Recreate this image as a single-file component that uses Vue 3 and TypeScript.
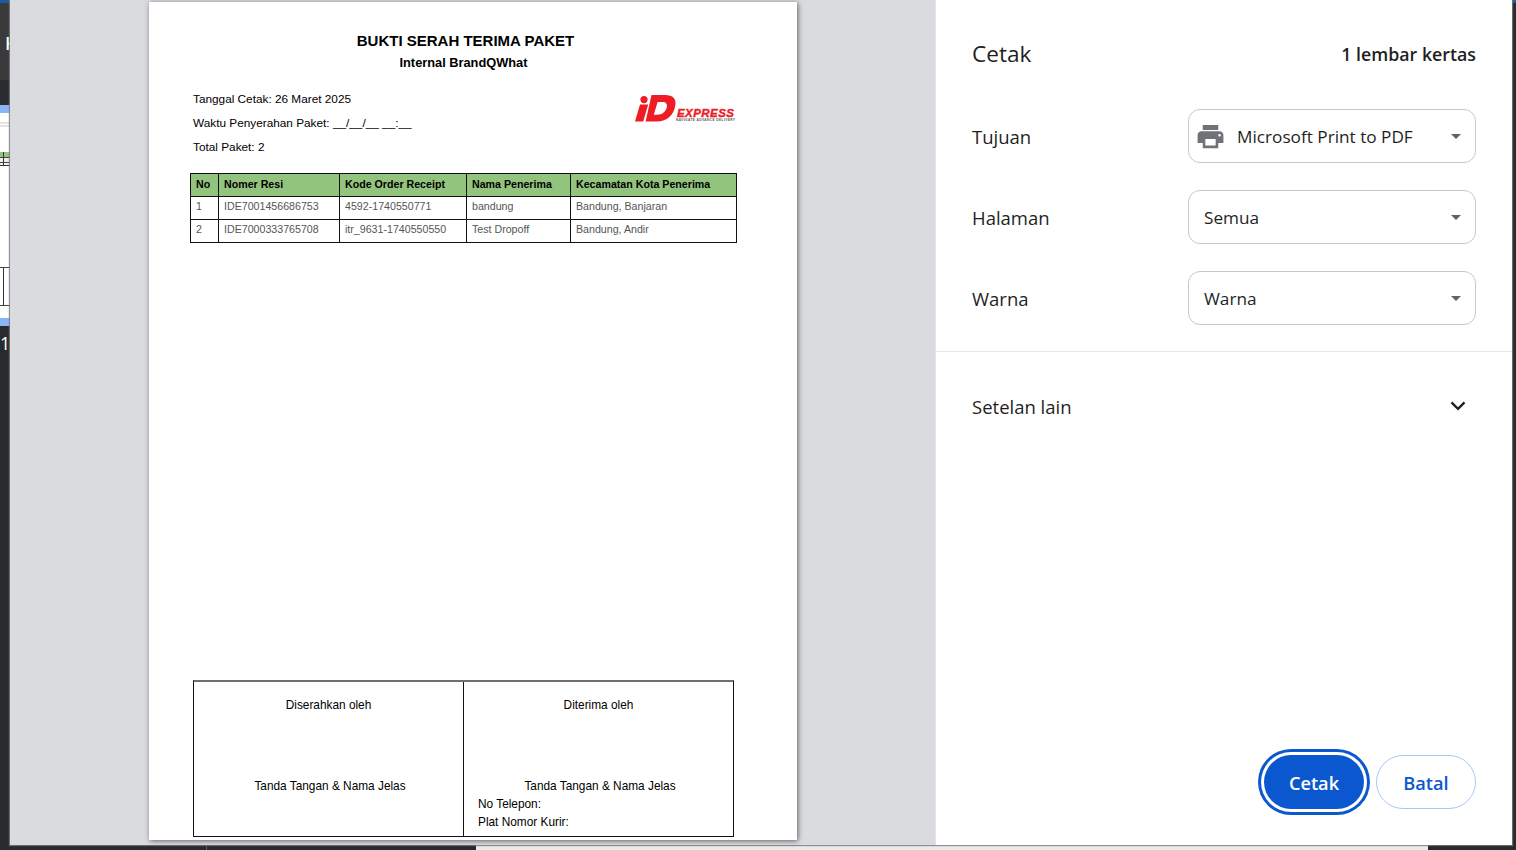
<script setup lang="ts">
interface Row {
  no: number
  resi: string
  order: string
  nama: string
  kota: string
}

const rows: Row[] = [
  { no: 1, resi: 'IDE7001456686753', order: '4592-1740550771', nama: 'bandung', kota: 'Bandung, Banjaran' },
  { no: 2, resi: 'IDE7000333765708', order: 'itr_9631-1740550550', nama: 'Test Dropoff', kota: 'Bandung, Andir' },
]

const settings = [
  { label: 'Tujuan', value: 'Microsoft Print to PDF', printer: true },
  { label: 'Halaman', value: 'Semua', printer: false },
  { label: 'Warna', value: 'Warna', printer: false },
]
</script>

<template>
  <div class="screen">
    <!-- window behind the dialog -->
    <div class="behind">
      <div class="b-blue-top"></div>
      <div class="b-head">K</div>
      <div class="b-sub"></div>
      <div class="b-blue"></div>
      <div class="b-sheet">
        <div class="mini-text"></div>
        <div class="mini-table"></div>
        <div class="mini-box"></div>
      </div>
      <div class="b-blue"></div>
      <div class="b-foot">1</div>
    </div>
    <div class="bottom-tick"></div>
    <div class="bottom-strip"></div>
    <div class="right-strip"></div>

    <div class="dialog">
      <div class="preview">
        <div class="page">
          <h1 class="doc-title">BUKTI SERAH TERIMA PAKET</h1>
          <h2 class="doc-sub">Internal BrandQWhat</h2>

          <div class="doc-head">
            <div class="meta">
              <p>Tanggal Cetak: 26 Maret 2025</p>
              <p>Waktu Penyerahan Paket: __/__/__ __:__</p>
              <p>Total Paket: 2</p>
            </div>
            <svg class="logo" width="102" height="30" viewBox="0 0 102 30">
              <circle cx="9" cy="4.6" r="3.6" fill="#ee1c25" />
              <polygon points="0,26.5 5,9.5 13.2,9.5 8.2,26.5" fill="#ee1c25" />
              <path
                fill="#ee1c25"
                fill-rule="evenodd"
                d="M16.5 0H30c8 0 11.5 4 10.3 10.5C38.8 20 32 26.5 22 26.5H10.6ZM22.6 7 18.8 19.8H22.5c4.5 0 8-2.6 9.2-7.2C32.6 9 31 7 27.6 7Z"
              />
              <text x="42" y="21.5" class="logo-word" textLength="57">EXPRESS</text>
              <text x="41" y="26" class="logo-tag" textLength="59">NAVIGATE ADVANCE DELIVERY</text>
            </svg>
          </div>

          <table class="resi-table">
            <colgroup>
              <col style="width: 28px" />
              <col style="width: 121px" />
              <col style="width: 127px" />
              <col style="width: 104px" />
              <col />
            </colgroup>
            <thead>
              <tr>
                <th>No</th>
                <th>Nomer Resi</th>
                <th>Kode Order Receipt</th>
                <th>Nama Penerima</th>
                <th>Kecamatan Kota Penerima</th>
              </tr>
            </thead>
            <tbody>
              <tr v-for="row in rows" :key="row.no">
                <td>{{ row.no }}</td>
                <td>{{ row.resi }}</td>
                <td>{{ row.order }}</td>
                <td>{{ row.nama }}</td>
                <td>{{ row.kota }}</td>
              </tr>
            </tbody>
          </table>

          <div class="sign-box">
            <div class="sign-col">
              <div class="sign-top">Diserahkan oleh</div>
              <div class="sign-name">Tanda Tangan &amp; Nama Jelas</div>
            </div>
            <div class="sign-col sign-right">
              <div class="sign-top">Diterima oleh</div>
              <div class="sign-name">Tanda Tangan &amp; Nama Jelas</div>
              <div class="sign-extra">No Telepon:</div>
              <div class="sign-extra">Plat Nomor Kurir:</div>
            </div>
          </div>
        </div>
      </div>

      <aside class="panel">
        <header class="panel-head">
          <span class="panel-title">Cetak</span>
          <span class="sheet-count">1 lembar kertas</span>
        </header>

        <div class="settings">
          <div v-for="item in settings" :key="item.label" class="setting">
            <span class="setting-label">{{ item.label }}</span>
            <div class="select" :class="{ 'has-icon': item.printer }">
              <svg v-if="item.printer" class="printer" width="31" height="31" viewBox="0 0 24 24">
                <path
                  fill="#6f7277"
                  d="M19 8H5c-1.66 0-3 1.34-3 3v6h4v4h12v-4h4v-6c0-1.66-1.34-3-3-3zm-3 11H8v-5h8v5zm3-7c-.55 0-1-.45-1-1s.45-1 1-1 1 .45 1 1-.45 1-1 1zm-1-9H6v4h12V3z"
                />
              </svg>
              <span class="select-value">{{ item.value }}</span>
              <span class="caret"></span>
            </div>
          </div>
        </div>

        <div class="more">
          <span>Setelan lain</span>
          <svg width="24" height="24" viewBox="0 0 24 24">
            <path d="M5.5 8.4l6.5 6.5 6.5-6.5" fill="none" stroke="#1f1f1f" stroke-width="2.3" />
          </svg>
        </div>

        <footer class="actions">
          <button class="btn btn-primary">Cetak</button>
          <button class="btn btn-ghost">Batal</button>
        </footer>
      </aside>
    </div>
  </div>
</template>

<style>
html,
body {
  margin: 0;
  background: #292a2d;
  overflow: hidden;
}
</style>

<style scoped>
.screen {
  position: relative;
  width: 1516px;
  height: 850px;
  overflow: hidden;
  background: #292a2d;
}

.behind {
  position: absolute;
  left: 0;
  top: 0;
  width: 10px;
  height: 850px;
  display: flex;
  flex-direction: column;
  overflow: hidden;
  font-family: 'Open Sans', sans-serif;
  color: #fff;
}

.b-blue-top {
  height: 3px;
  background: #1a5ca4;
}

.b-head {
  height: 77px;
  background: #3a3a3b;
  font-size: 18px;
  font-weight: 600;
  line-height: 80px;
  padding-left: 5px;
}

.b-sub {
  height: 25px;
  background: #2b2c2f;
}

.b-blue {
  height: 8px;
  flex: none;
  background: #8ab4f8;
}

.b-sheet {
  height: 205px;
  background: #fff;
  display: flex;
  flex-direction: column;
}

.mini-text {
  height: 5px;
  margin-top: 9px;
  background: linear-gradient(#e4e4e4 0 2px, #fff 2px 3px, #e4e4e4 3px);
}

.mini-table {
  height: 14px;
  margin-top: 25px;
  background: linear-gradient(#93c47d 0 5px, #444 5px 6px, #eee 6px 10px, #444 10px 11px, #eee 11px 13px, #333 13px);
  position: relative;
}

.mini-table::after {
  content: '';
  position: absolute;
  left: 3px;
  top: 0;
  bottom: 0;
  width: 1px;
  background: #333;
}

.mini-box {
  height: 37px;
  margin-top: 101px;
  border-top: 1px solid #444;
  border-bottom: 1px solid #444;
  position: relative;
}

.mini-box::after {
  content: '';
  position: absolute;
  left: 3px;
  top: 0;
  bottom: 0;
  width: 1px;
  background: #333;
}

.b-foot {
  flex: 1;
  font-size: 18px;
  font-weight: 500;
  line-height: 34px;
  padding-left: 0;
}

.bottom-tick {
  position: absolute;
  left: 206px;
  top: 846px;
  width: 1px;
  height: 4px;
  background: #5c5d60;
}

.bottom-strip {
  position: absolute;
  left: 476px;
  top: 845px;
  width: 952px;
  height: 5px;
  background: #e9ebe9;
}

.right-strip {
  position: absolute;
  left: 1512px;
  top: 0;
  width: 4px;
  height: 3px;
  background: #1a5ca4;
}

.dialog {
  position: absolute;
  left: 10px;
  top: 0;
  width: 1502px;
  height: 845px;
  display: flex;
  background: #fff;
  box-shadow: 0 0 1px 1px rgba(120, 120, 120, 0.8);
}

.preview {
  width: 925px;
  flex: none;
  box-sizing: border-box;
  padding: 2px 0 0 139px;
  background: #dadbdf;
}

.page {
  width: 648px;
  height: 838px;
  box-sizing: border-box;
  padding: 0 60px 3px 41px;
  display: flex;
  flex-direction: column;
  background: #fff;
  box-shadow: 1px 1px 5px rgba(0, 0, 0, 0.55);
  font-family: 'Liberation Sans', Arial, sans-serif;
  color: #000;
}

.doc-title {
  margin: 30px 0 0;
  padding-left: 4px;
  font-size: 15px;
  line-height: 18px;
  font-weight: 700;
  text-align: center;
}

.doc-sub {
  margin: 5px 0 0;
  font-size: 12.8px;
  line-height: 15px;
  font-weight: 700;
  text-align: center;
}

.doc-head {
  display: flex;
  justify-content: space-between;
  align-items: flex-start;
  margin-top: 17px;
  padding-left: 3px;
  height: 86px;
}

.meta p {
  margin: 0;
  font-size: 11.8px;
  line-height: 24px;
}

.logo {
  margin: 8px 0 0 0;
  flex: none;
}

.logo-word {
  font-family: 'Liberation Sans', Arial, sans-serif;
  font-size: 11.5px;
  font-weight: 700;
  font-style: italic;
  fill: #ee1c25;
  stroke: #ee1c25;
  stroke-width: 0.4px;
}

.logo-tag {
  font-family: 'Liberation Sans', Arial, sans-serif;
  font-size: 3.2px;
  font-weight: 700;
  fill: #555;
}

.resi-table {
  width: 547px;
  table-layout: fixed;
  border-collapse: collapse;
  font-size: 10.65px;
  color: #555;
}

.resi-table th,
.resi-table td {
  box-sizing: border-box;
  height: 23px;
  padding: 0 5px 2px;
  border: 1.2px solid #111;
  text-align: left;
  white-space: nowrap;
}

.resi-table td {
  padding-bottom: 4px;
}

.resi-table th {
  background: #93c47d;
  color: #000;
  font-weight: 700;
}

.sign-box {
  margin: auto 3px 0;
  height: 157px;
  box-sizing: border-box;
  display: flex;
  border: 1.2px solid #111;
  border-top: 2px solid #6f6f6f;
  font-size: 11.85px;
  line-height: 18px;
}

.sign-col {
  flex: 1;
  min-width: 0;
  box-sizing: border-box;
  padding-top: 14px;
  text-align: center;
}

.sign-right {
  border-left: 1.2px solid #111;
}

.sign-top {
  height: 81px;
}

.sign-name {
  padding-left: 3px;
}

.sign-extra {
  text-align: left;
  padding-left: 14px;
}

.panel {
  flex: 1;
  min-width: 0;
  display: flex;
  flex-direction: column;
  box-sizing: border-box;
  background: #fff;
  border-left: 1px solid #e3e4e6;
  font-family: 'Open Sans', 'Noto Sans', sans-serif;
  color: #1f1f1f;
}

.panel-head {
  display: flex;
  justify-content: space-between;
  align-items: center;
  height: 109px;
  padding: 0 36px 2px;
  box-sizing: border-box;
}

.panel-title {
  font-size: 22.6px;
}

.sheet-count {
  font-size: 17.8px;
  font-weight: 600;
}

.settings {
  display: flex;
  flex-direction: column;
  gap: 27px;
  padding: 0 36px 26px;
  border-bottom: 1px solid #e6e7e9;
}

.setting {
  display: flex;
  align-items: center;
  justify-content: space-between;
}

.setting-label {
  font-size: 18.5px;
}

.select {
  position: relative;
  width: 288px;
  height: 54px;
  box-sizing: border-box;
  display: flex;
  align-items: center;
  padding: 0 15px;
  border: 1px solid #c7c8ca;
  border-radius: 12px;
  font-size: 17.2px;
}

.select.has-icon {
  padding-left: 6px;
}

.printer {
  margin-right: 11px;
  flex: none;
}

.caret {
  position: absolute;
  right: 14px;
  top: 24px;
  width: 0;
  height: 0;
  border-left: 5.5px solid transparent;
  border-right: 5.5px solid transparent;
  border-top: 5px solid #5f6368;
}

.more {
  display: flex;
  align-items: center;
  justify-content: space-between;
  height: 110px;
  padding: 0 36px 2px;
  box-sizing: border-box;
  font-size: 18.5px;
}

.more svg {
  margin-right: 6px;
}

.actions {
  margin-top: auto;
  display: flex;
  justify-content: flex-end;
  align-items: center;
  gap: 12px;
  padding: 0 36px 36px;
}

.btn {
  width: 100px;
  height: 54px;
  padding: 2px 0 0;
  border-radius: 27px;
  font-family: inherit;
  font-size: 18.2px;
  font-weight: 600;
  cursor: pointer;
}

.btn-primary {
  border: none;
  color: #fff;
  background: #0b57d0;
  box-shadow: 0 0 0 3px #fff, 0 0 0 6px #0b57d0;
}

.btn-ghost {
  color: #0b57d0;
  background: #fff;
  border: 1px solid #a8c7fa;
}
</style>
